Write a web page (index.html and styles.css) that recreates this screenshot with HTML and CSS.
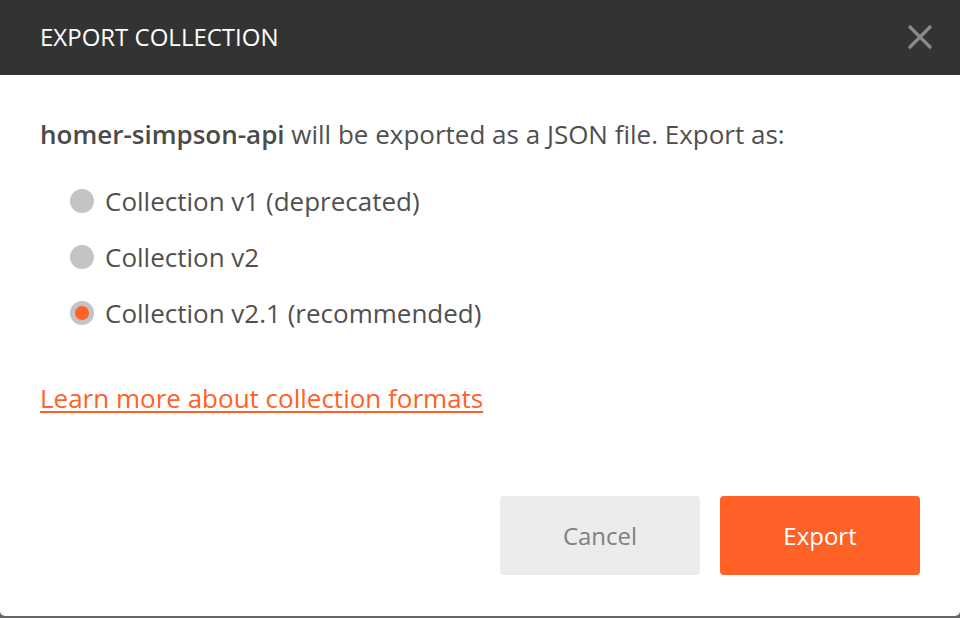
FILE: index.html
```html
<!DOCTYPE html>
<html>
<head>
<meta charset="utf-8">
<link rel="stylesheet" href="styles.css">
</head>
<body>
<div class="modal">
  <div class="modal-header">
    <div class="title">EXPORT COLLECTION</div>
    <svg class="close" width="26" height="26" viewBox="0 0 26 26"><path d="M2 2 L24 24 M24 2 L2 24" stroke="#8a8a8a" stroke-width="3.2" fill="none"/></svg>
  </div>
  <div class="modal-body">
    <p class="intro"><b>homer-simpson-api</b> will be exported as a JSON file. Export as:</p>
    <ul class="options">
      <li class="option"><span class="radio"></span>Collection v1 (deprecated)</li>
      <li class="option"><span class="radio"></span>Collection v2</li>
      <li class="option"><span class="radio checked"></span>Collection v2.1 (recommended)</li>
    </ul>
    <a class="learn" href="#">Learn more about collection formats</a>
  </div>
  <div class="modal-footer">
    <button class="btn btn-cancel">Cancel</button>
    <button class="btn btn-export">Export</button>
  </div>
</div>
</body>
</html>
```
FILE: styles.css
```css
html, body {
  margin: 0;
  padding: 0;
  background: #666666;
}
body {
  width: 960px;
  height: 618px;
  overflow: hidden;
  font-family: "Open Sans", "Noto Sans", sans-serif;
}
.modal {
  width: 960px;
  height: 616px;
  background: #ffffff;
  border-radius: 0 0 5px 5px;
  display: flex;
  flex-direction: column;
}
.modal-header {
  height: 75px;
  background: #333333;
  display: flex;
  align-items: center;
  justify-content: space-between;
  padding: 0 27px 0 40px;
}
.title {
  color: #ffffff;
  font-size: 24px;
  line-height: 32px;
  margin-top: -2px;
}
.close {
  display: block;
  margin-top: -1px;
}
.modal-body {
  padding: 0 40px;
  flex: 1;
  display: flex;
  flex-direction: column;
  align-items: flex-start;
}
.intro {
  margin: 41px 0 0;
  font-size: 26px;
  line-height: 36px;
  color: #505050;
}
.intro b {
  font-weight: 600;
  color: #4a4a4a;
}
.options {
  list-style: none;
  margin: 31px 0 0;
  padding: 0 0 0 30px;
  display: flex;
  flex-direction: column;
  gap: 20px;
}
.option {
  display: flex;
  align-items: center;
  height: 36px;
  font-size: 26px;
  color: #505050;
}
.radio {
  width: 24px;
  height: 24px;
  border-radius: 50%;
  background: #c4c4c4;
  margin-right: 11px;
  display: flex;
  align-items: center;
  justify-content: center;
  flex: none;
}
.radio.checked::after {
  content: "";
  width: 14px;
  height: 14px;
  border-radius: 50%;
  background: #ff6126;
}
.learn {
  margin-top: 49px;
  font-size: 26px;
  line-height: 36px;
  color: #ff6126;
  text-decoration: underline;
  text-underline-offset: 3px;
  text-decoration-thickness: 1.5px;
}
.modal-footer {
  display: flex;
  justify-content: flex-end;
  gap: 20px;
  padding: 0 40px 41px;
}
.btn {
  width: 200px;
  height: 79px;
  border: none;
  border-radius: 4px;
  font-family: "Open Sans", "Noto Sans", sans-serif;
  font-size: 24px;
  padding: 0;
}
.btn-cancel {
  background: #ececec;
  color: #808080;
}
.btn-export {
  background: #ff6126;
  color: #ffffff;
}
```
